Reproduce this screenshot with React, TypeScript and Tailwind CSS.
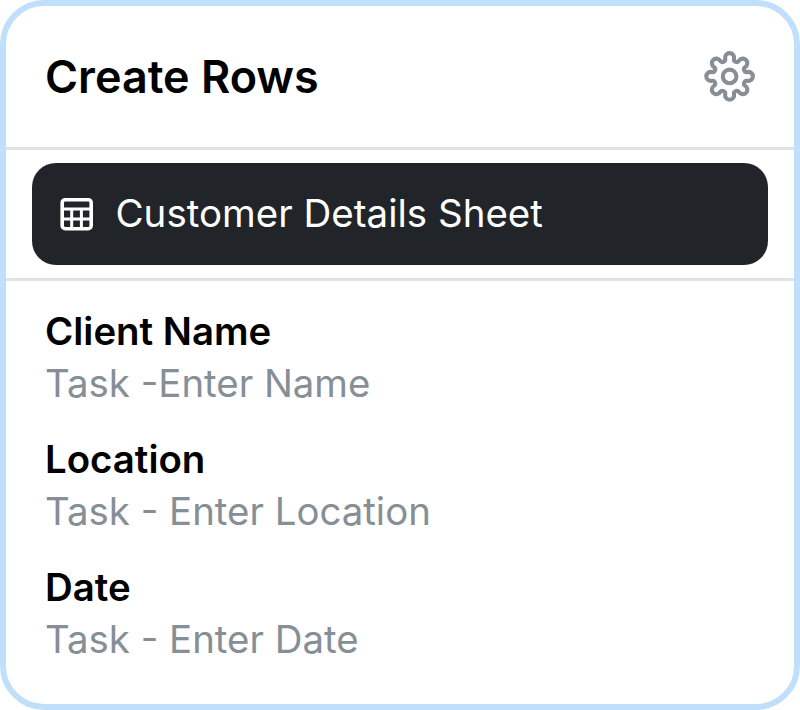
import React from "react";

const fields = [
  { label: "Client Name", value: "Task -Enter Name" },
  { label: "Location", value: "Task - Enter Location" },
  { label: "Date", value: "Task - Enter Date" },
];

const TEETH = 8;
const RADIUS = 18.33;
const HALF_TOOTH = 13.86;

const polar = (degrees: number) => {
  const a = (degrees * Math.PI) / 180;
  return `${(RADIUS * Math.sin(a)).toFixed(2)} ${(-RADIUS * Math.cos(a)).toFixed(2)}`;
};

// Each tooth is an outward arc followed by a smaller inward arc.
const gearPath =
  `M${polar(-HALF_TOOTH)}` +
  Array.from({ length: TEETH }, (_, i) => {
    const a = i * 45;
    return `A4.5 4.5 0 1 1 ${polar(a + HALF_TOOTH)}A2.8 2.8 0 0 0 ${polar(a + 45 - HALF_TOOTH)}`;
  }).join("") +
  "Z";

function GearIcon() {
  return (
    <svg className="h-[52px] w-[52px]" viewBox="-25.6 -25.4 52 52" fill="none" stroke="#868e96" strokeWidth="4.1" strokeLinejoin="round">
      <path d={gearPath} />
      <circle r="6.8" />
    </svg>
  );
}

function TableIcon() {
  return (
    <svg className="h-[34px] w-[34px]" viewBox="0 0 34 34" fill="none" stroke="#fff" strokeWidth="3">
      <rect x="2.2" y="2.7" width="29" height="29" rx="3" strokeWidth="3.6" />
      <path d="M2 12h29M2 22h29M11.7 12v20M21.4 12v20" />
    </svg>
  );
}

export default function App() {
  return (
    <div className="h-[710px] w-[800px] overflow-hidden rounded-[44px] border-[6px] border-[#bfdffb] bg-white font-['Inter',sans-serif]">
      <header className="flex h-[144px] items-center justify-between border-b-[3px] border-[#dee2e6] pr-[38px] pl-[39px]">
        <h1 className="pt-px text-[44.9px] leading-none font-semibold text-black">Create Rows</h1>
        <GearIcon />
      </header>
      <div className="flex h-[131px] items-center border-b-[3px] border-[#dee2e6] px-[26px]">
        <div className="flex h-[102px] w-full items-center gap-[21.5px] rounded-[24px] bg-[#212529] pl-7 text-white">
          <TableIcon />
          <span className="pb-0.5 text-[38.5px] leading-none">Customer Details Sheet</span>
        </div>
      </div>
      <main className="flex flex-col gap-6 pt-[25px] pl-[39px]">
        {fields.map((field) => (
          <section key={field.label} className="text-[38.4px]">
            <h2 className="leading-[51px] font-semibold text-black">{field.label}</h2>
            <p className="leading-[53px] text-[#868e96]">{field.value}</p>
          </section>
        ))}
      </main>
    </div>
  );
}
